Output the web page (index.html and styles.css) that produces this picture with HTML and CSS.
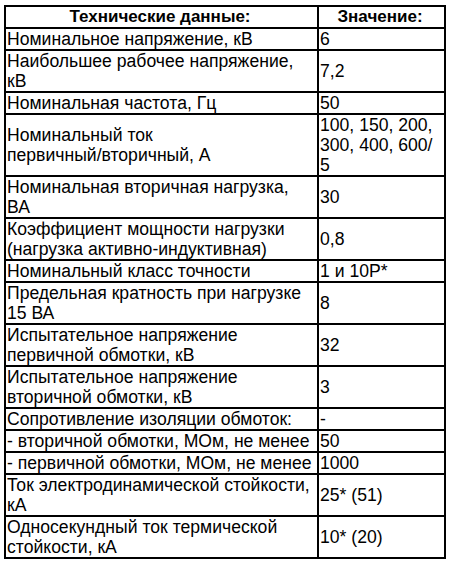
FILE: index.html
```html
<!DOCTYPE html>
<html lang="ru">
<head>
<meta charset="utf-8">
<title>Технические данные</title>
<link rel="stylesheet" href="styles.css">
</head>
<body>
<table class="spec">
  <colgroup><col class="c-name"><col class="c-val"></colgroup>
  <thead>
    <tr><th>Технические данные:</th><th>Значение:</th></tr>
  </thead>
  <tbody>
    <tr><td>Номинальное напряжение, кВ</td><td>6</td></tr>
    <tr><td>Наибольшее рабочее напряжение, кВ</td><td>7,2</td></tr>
    <tr><td>Номинальная частота, Гц</td><td>50</td></tr>
    <tr><td>Номинальный ток <span class="nw">первичный/вторичный,</span> А</td><td>100, 150, 200, 300, 400, 600/ 5</td></tr>
    <tr><td>Номинальная вторичная нагрузка, ВА</td><td>30</td></tr>
    <tr><td>Коэффициент мощности нагрузки (нагрузка активно-индуктивная)</td><td>0,8</td></tr>
    <tr><td>Номинальный класс точности</td><td>1 и 10Р*</td></tr>
    <tr><td>Предельная кратность при нагрузке 15 ВА</td><td>8</td></tr>
    <tr><td>Испытательное напряжение первичной обмотки, кВ</td><td>32</td></tr>
    <tr><td>Испытательное напряжение вторичной обмотки, кВ</td><td>3</td></tr>
    <tr><td>Сопротивление изоляции обмоток:</td><td>-</td></tr>
    <tr><td class="nw">- вторичной обмотки, МОм, не менее</td><td>50</td></tr>
    <tr><td class="nw">- первичной обмотки, МОм, не менее</td><td>1000</td></tr>
    <tr><td>Ток электродинамической стойкости, кА</td><td>25* (51)</td></tr>
    <tr><td>Односекундный ток термической стойкости, кА</td><td>10* (20)</td></tr>
  </tbody>
</table>
</body>
</html>
```
FILE: styles.css
```css
html, body {
  margin: 0;
  padding: 0;
  background: #ffffff;
}
body {
  padding: 5px 0 0 4px;
  font-family: "Liberation Sans", Arial, sans-serif;
  font-size: 17.6px;
  color: #000000;
}
.spec {
  border-collapse: collapse;
  width: 440px;
  table-layout: fixed;
}
.c-name { width: 313px; }
.c-val { width: 127px; }
.spec th,
.spec td {
  border: 2px solid #000000;
  padding: 0 4px 0 1px;
  line-height: 20px;
  vertical-align: middle;
  text-align: left;
}
.spec td.nw {
  padding-right: 0;
}
.nw {
  white-space: nowrap;
}
.spec th {
  font-weight: bold;
  font-size: 17px;
  text-align: center;
}
```
